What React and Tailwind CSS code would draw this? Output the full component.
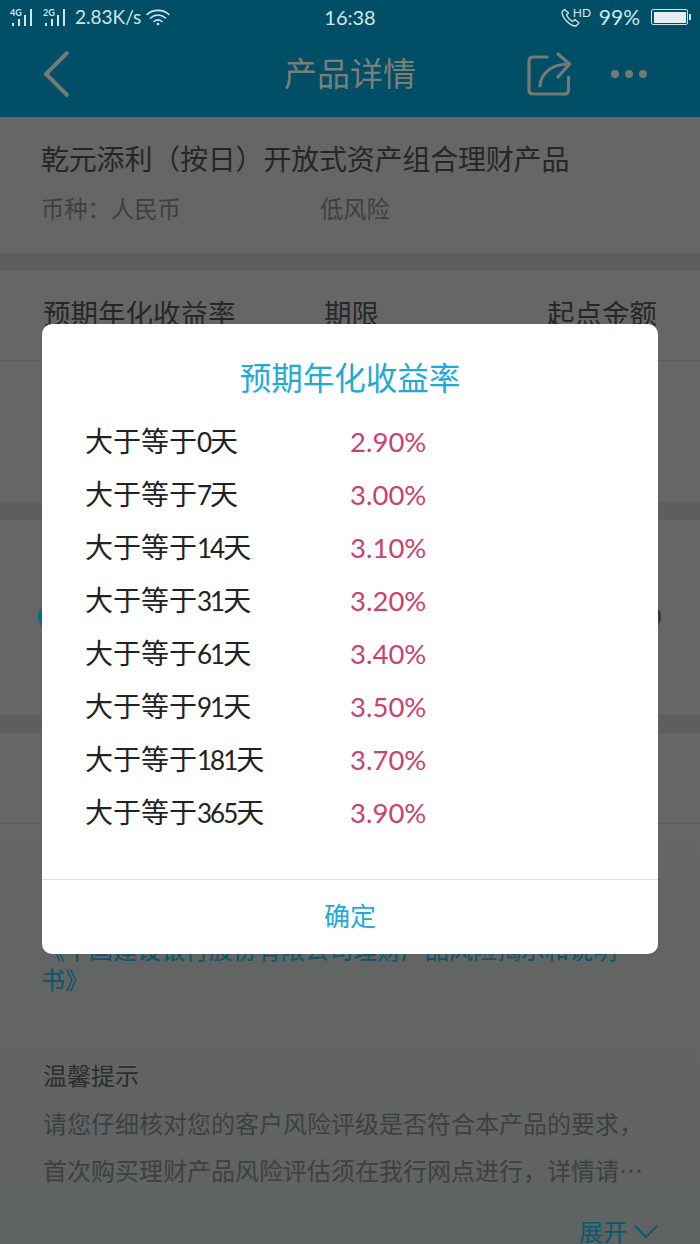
const rates = [
  { days: '0', rate: '2.90%' },
  { days: '7', rate: '3.00%' },
  { days: '14', rate: '3.10%' },
  { days: '31', rate: '3.20%' },
  { days: '61', rate: '3.40%' },
  { days: '91', rate: '3.50%' },
  { days: '181', rate: '3.70%' },
  { days: '365', rate: '3.90%' },
];

function Signal({ label }) {
  return (
    <div className="relative w-[28px] h-[34px]">
      <span className="absolute left-0 top-[8px] text-[9px] leading-[9px] font-bold">{label}</span>
      <div className="absolute left-[1.5px] bottom-[8px] flex items-end gap-[3.5px]">
        <div className="w-[2.5px] h-[3px] bg-[#d3e4ea]"></div>
        <div className="w-[2.5px] h-[7px] bg-[#d3e4ea]"></div>
        <div className="w-[2.5px] h-[11px] bg-[#d3e4ea]"></div>
        <div className="w-[2.5px] h-[17px] bg-[#d3e4ea]"></div>
      </div>
    </div>
  );
}

function StatusBar() {
  return (
    <div className="h-[34px] grid grid-cols-[1fr_auto_1fr] items-center text-[#d3e4ea] text-[19px] font-['Lato','Noto_Sans_CJK_SC',sans-serif]">
      <div className="flex items-center pl-[10px]">
        <Signal label="4G" />
        <div className="w-[5px]"></div>
        <Signal label="2G" />
        <span className="ml-[4px] mr-[5px]">2.83K/s</span>
        <svg width="24" height="18" viewBox="0 0 24 18" fill="none" stroke="#d3e4ea" strokeWidth="1.6" strokeLinecap="round">
          <path d="M1 6.5C7 1 17 1 23 6.5" />
          <path d="M4.5 10C9 6 15 6 19.5 10" />
          <path d="M8 13.5C10.5 11.5 13.5 11.5 16 13.5" />
          <circle cx="12" cy="16" r="1.3" fill="#d3e4ea" stroke="none" />
        </svg>
      </div>
      <span className="text-[20px]">16:38</span>
      <div className="flex items-center justify-end pr-[9px]">
        <div className="relative w-[28px] h-[20px]">
          <svg className="absolute left-0 top-[1px]" width="20" height="19" viewBox="0 0 20 19" fill="none" stroke="#d3e4ea" strokeWidth="1.3" strokeLinejoin="round">
            <path d="M3.5 1.5L1 4C1 10 9 18 15 18L18 15L14 11.5L11.5 13.5C9 12 6.5 9.5 5.5 7L7.5 5L3.5 1.5Z" />
          </svg>
          <span className="absolute left-[12px] top-[-1px] text-[12px] leading-[14px]">HD</span>
        </div>
        <span className="ml-[10px] mr-[11px] text-[21px]">99%</span>
        <div className="w-[37px] h-[16px] border border-[#d3e4ea] rounded-[2px] p-[1.5px]">
          <div className="w-full h-full bg-[#e6eef0]"></div>
        </div>
        <div className="w-[2px] h-[6px] bg-[#d3e4ea] ml-[1px]"></div>
      </div>
    </div>
  );
}

function Header() {
  return (
    <div className="h-[83px] grid grid-cols-[1fr_auto_1fr] items-center text-[#7b7d79]">
      <div className="pl-[42px] pb-[3px]">
        <svg width="28" height="48" viewBox="0 0 28 48" fill="none" stroke="#777976" strokeWidth="4">
          <path d="M26 2L4 24L26 46" />
        </svg>
      </div>
      <span className="text-[33px] pb-[3px]">产品详情</span>
      <div className="flex items-center justify-end pr-[53px] pb-[3px] gap-[38px]">
        <svg width="46" height="44" viewBox="0 0 46 44" fill="none" stroke="#777976" strokeWidth="3.2" strokeLinecap="round" strokeLinejoin="round">
          <path d="M20 5H6Q2 5 2 9V38Q2 42 6 42H38Q41.5 42 41.5 38V25" />
          <path d="M13 34C14 20 26 12 42 12" />
          <path d="M31 2L42.5 12L31 25" />
        </svg>
        <div className="flex gap-[6px]">
          <div className="w-[8px] h-[8px] rounded-full bg-[#777976]"></div>
          <div className="w-[8px] h-[8px] rounded-full bg-[#777976]"></div>
          <div className="w-[8px] h-[8px] rounded-full bg-[#777976]"></div>
        </div>
      </div>
    </div>
  );
}

function Band() {
  return <div className="h-[18px] bg-[#5e5e5e]"></div>;
}

function Dialog() {
  return (
    <div className="absolute left-[42px] top-[324px] w-[616px] h-[630px] bg-white rounded-[10px] flex flex-col">
      <h3 className="mt-[30px] h-[48px] leading-[48px] text-center text-[31.5px] text-[#22a9d6]">预期年化收益率</h3>
      <div className="mt-[12px] pl-[43px]">
        {rates.map((r) => (
          <div key={r.days} className="h-[53px] flex items-center">
            <span className="w-[265px] text-[28px] text-[#222222]">
              大于等于<span className="text-[26px] tracking-[-2px]">{r.days}</span>天
            </span>
            <span className="pt-[3px] text-[27.5px] text-[#c94272]">{r.rate}</span>
          </div>
        ))}
      </div>
      <div className="mt-auto h-[75px] pb-[2px] border-t border-[#e2e2e2] flex items-center justify-center text-[26px] text-[#22a9d6]">
        确定
      </div>
    </div>
  );
}

export default function App() {
  return (
    <div className="relative w-[700px] h-[1244px] overflow-hidden bg-[#666666] font-['Lato','Noto_Sans_CJK_SC',sans-serif]">
      <div className="bg-[#004f66]">
        <StatusBar />
        <Header />
      </div>

      <section className="h-[136px] px-[41px] pt-[22px]">
        <h1 className="text-[28px] tracking-[-0.2px] leading-[40px] text-[#262626] whitespace-nowrap">乾元添利（按日）开放式资产组合理财产品</h1>
        <div className="mt-[14px] flex text-[23.3px] leading-[32px] text-[#3f3f3f]">
          <span className="w-[279px]">币种：人民币</span>
          <span>低风险</span>
        </div>
      </section>
      <Band />

      <section className="h-[231px]">
        <div className="h-[90px] border-b border-[#5b5b5b] px-[43px] pt-[23px] flex justify-between text-[27.5px] leading-[40px] text-[#262626]">
          <span className="w-[281px]">预期年化收益率</span>
          <span>期限</span>
          <span className="ml-auto">起点金额</span>
        </div>
      </section>
      <Band />

      <section className="h-[195px] relative">
        <div className="absolute left-[38px] top-[83px] w-[28px] h-[28px] rounded-full bg-[#00708c]"></div>
        <div className="absolute left-[633px] top-[83px] w-[28px] h-[28px] rounded-full bg-[#3a3a3a]"></div>
      </section>
      <Band />

      <section className="h-[511px] bg-linear-to-b from-[#666666] to-[#5f6362]">
        <div className="h-[91px] border-b border-[#5b5b5b]"></div>
        <p className="mt-[111px] pl-[41px] pr-[60px] text-[24px] leading-[30px] text-[#0d5468]">
          《中国建设银行股份有限公司理财产品风险揭示和说明书》
        </p>
        <h2 className="mt-[65px] px-[43px] text-[24px] leading-[32px] text-[#2c2c2c]">温馨提示</h2>
        <p className="mt-[8px] px-[43px] text-[24px] leading-[47px] text-[#3d4040]">
          请您仔细核对您的客户风险评级是否符合本产品的要求，<br />
          首次购买理财产品风险评估须在我行网点进行，详情请⋯
        </p>
        <div className="mt-[27px] pr-[42px] flex items-center justify-end gap-[7px] text-[24px] leading-[22px] text-[#0a5870]">
          <span>展开</span>
          <svg width="24" height="14" viewBox="0 0 24 14" fill="none" stroke="#0a5870" strokeWidth="1.8">
            <path d="M1 1L12 12L23 1" />
          </svg>
        </div>
      </section>

      <Dialog />
    </div>
  );
}
